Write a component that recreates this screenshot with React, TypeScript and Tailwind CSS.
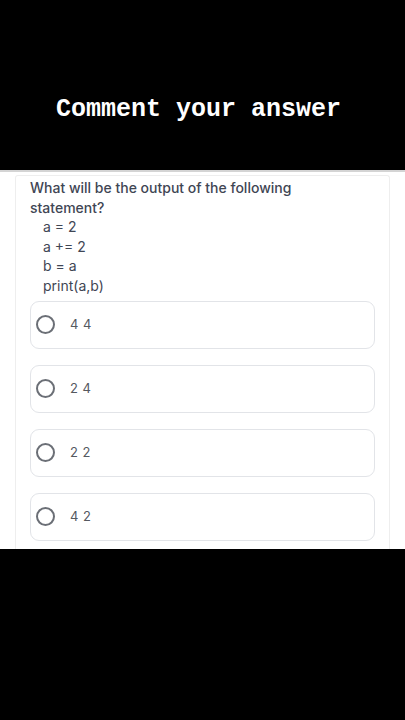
const options = ["4 4", "2 4", "2 2", "4 2"];

const code = ["a = 2", "a += 2", "b = a", "print(a,b)"];

export default function App() {
  return (
    <div className="w-[405px] h-[720px] bg-black flex flex-col font-['Inter',sans-serif]">
      {/* Header */}
      <div className="h-[170px] flex items-center justify-center pt-[49px] pr-[8px]">
        <h1 className="text-white text-[25px] font-bold font-['Liberation_Mono',monospace] tracking-normal">
          Comment your answer
        </h1>
      </div>

      {/* Quiz area */}
      <div className="bg-white border-t-2 border-[#d4d4d4] h-[379px] pt-[3px] px-[15px]">
        <div className="h-full border-x border-t border-[#eeeeee] rounded-t-[3px] px-[14px] pt-[2px]">
          <p className="text-[#3f4654] text-[14px] font-medium leading-[20px]">
            What will be the output of the following
            <br />
            statement?
          </p>
          <div className="pl-[13px] -mt-[1px] text-[#3f4654] text-[14px] leading-[19.7px]">
            {code.map((line) => (
              <div key={line}>{line}</div>
            ))}
          </div>

          <div className="flex flex-col gap-4 mt-[5px] w-[345px]">
            {options.map((opt) => (
              <div
                key={opt}
                className="h-[48px] border border-[#e2e4e8] rounded-[9px] flex items-center pl-[5px]"
              >
                <span className="w-[19px] h-[19px] rounded-full border-2 border-[#6b6f76]" />
                <span className="ml-[15px] text-[13px] text-[#55595f] tracking-[0.5px]">{opt}</span>
              </div>
            ))}
          </div>
        </div>
      </div>
    </div>
  );
}
